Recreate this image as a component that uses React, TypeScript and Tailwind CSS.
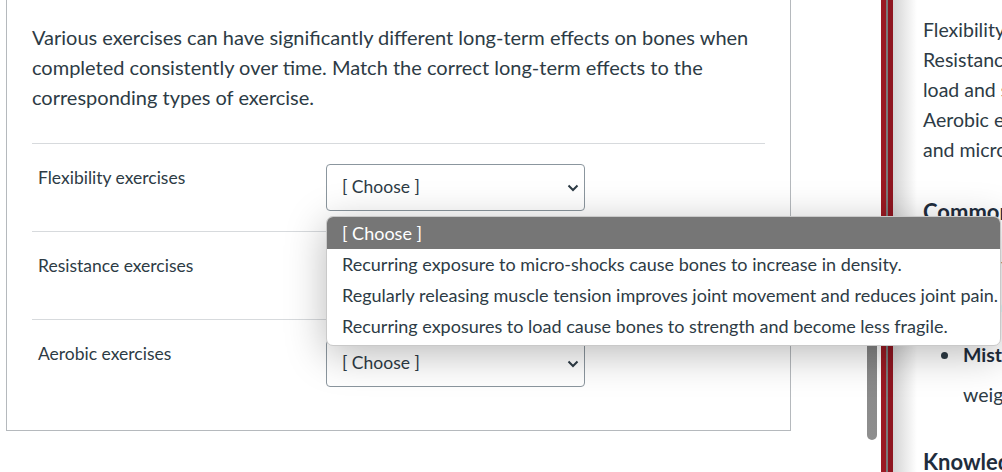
import React from "react";

const rows = ["Flexibility exercises", "Resistance exercises", "Aerobic exercises"];

const options = [
  "[ Choose ]",
  "Recurring exposure to micro-shocks cause bones to increase in density.",
  "Regularly releasing muscle tension improves joint movement and reduces joint pain.",
  "Recurring exposures to load cause bones to strength and become less fragile.",
];

function Chevron() {
  return (
    <svg width="12" height="8" viewBox="0 0 12 8" className="text-[#2d3b45]">
      <polyline points="1.5,1.5 6,6 10.5,1.5" fill="none" stroke="currentColor" strokeWidth="2" />
    </svg>
  );
}

function FakeSelect() {
  return (
    <div className="w-[259px] h-[47px] border border-[#8b969e] rounded-[4px] bg-white flex items-center justify-between pl-[15px] pr-[5px]">
      <span className="text-[17.5px]">[ Choose ]</span>
      <Chevron />
    </div>
  );
}

export default function App() {
  return (
    <div className="w-[1002px] h-[472px] overflow-hidden bg-white flex relative font-['Lato','Noto_Sans',sans-serif] text-[#2d3b45]">
      {/* main question column */}
      <div className="w-[881px] shrink-0 relative">
        <div className="ml-[6px] w-[785px] h-[431px] border-x border-b border-[#b5b9bd] pt-[22px] px-[25px]">
          <p className="text-[20px] leading-[30px]">
            Various exercises can have significantly different long-term effects on bones when
            completed consistently over time. Match the correct long-term effects to the
            corresponding types of exercise.
          </p>
          <div className="mt-[31px]">
            {rows.map((r) => (
              <div key={r} className="flex border-t border-[#d7dadd] py-[20px]">
                <div className="w-[294px] pl-[6px] pt-[2px] text-[17.5px] leading-[24px]">{r}</div>
                <FakeSelect />
              </div>
            ))}
          </div>
        </div>
        {/* scrollbar thumb */}
        <div className="absolute left-[867px] top-[228px] w-[10px] h-[212px] rounded-full bg-gradient-to-b from-[#7a7a7a] to-[#8f8f8f]" />
      </div>

      {/* divider bar */}
      <div className="w-[12px] shrink-0 flex">
        <div className="w-[5px] bg-[#9a1a23]" />
        <div className="w-[2px] bg-[#7b7b7b]" />
        <div className="w-[5px] bg-[#8f1520]" />
      </div>

      {/* sidebar */}
      <div className="flex-1 relative bg-white overflow-hidden">
        <div className="absolute inset-y-0 left-0 w-[24px] bg-gradient-to-r from-[#d4d4d4] to-white" />
        <div className="relative pl-[30px] pt-[15px] text-[19.5px] leading-[30px] whitespace-nowrap">
          <div>Flexibility exercises improve range</div>
          <div>Resistance exercises place a</div>
          <div>load and stress on bones.</div>
          <div>Aerobic exercises create impact</div>
          <div>and micro-shocks to bones.</div>
          <div className="mt-[32px] text-[22px] font-bold text-[#1f2d3d]">Common Misconceptions</div>
          <div className="mt-[23px]">The idea that bones stop</div>
          <div className="mt-[10px] font-bold">Myth: only weight lifting</div>
          <div className="mt-[20px] pl-[18px] flex items-center font-bold text-[#1f2d3d]">
            <span className="shrink-0 w-[7px] h-[7px] rounded-full bg-[#2d3b45] mr-[15px]" />
            Mistake: skipping
          </div>
          <div className="mt-[10px] pl-[40px]">weight-bearing work</div>
          <div className="mt-[37px] text-[22px] font-bold text-[#1f2d3d]">Knowledge Check</div>
        </div>
      </div>

      {/* open dropdown list */}
      <div className="absolute left-[326px] top-[216px] w-[675px] h-[130px] bg-white border border-[#c9c9c9] rounded-[7px] overflow-hidden shadow-[0_8px_40px_rgba(0,0,0,0.28)] text-[18px] leading-[32px] whitespace-nowrap">
        {options.map((o, i) => (
          <div key={o} className={i === 0 ? "bg-[#767676] text-white pl-[15px] -mt-px pt-px" : "pl-[15px] -mt-px"}>
            {o}
          </div>
        ))}
      </div>
    </div>
  );
}
